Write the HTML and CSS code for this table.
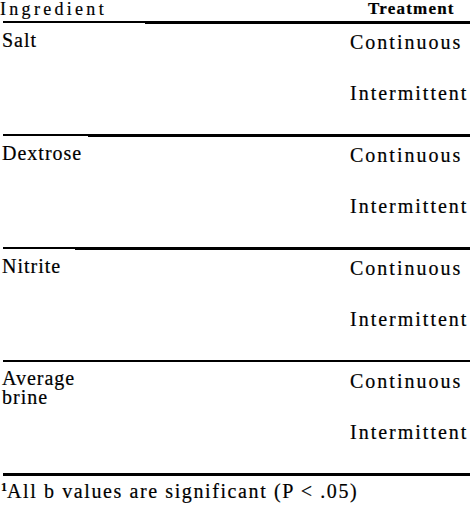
FILE: index.html
```html
<!DOCTYPE html>
<html>
<head>
<meta charset="utf-8">
<link rel="stylesheet" href="styles.css">
</head>
<body>
<div class="page">
  <div class="row head">
    <div class="h-ing">Ingredient</div>
    <div class="h-trt">Treatment</div>
  </div>
  <div class="row group thick-a">
    <div class="ing">Salt</div>
    <div class="trt"><div class="t1">Continuous</div><div class="t2">Intermittent</div></div>
  </div>
  <div class="row group thick-b">
    <div class="ing">Dextrose</div>
    <div class="trt"><div class="t1">Continuous</div><div class="t2">Intermittent</div></div>
  </div>
  <div class="row group thick-c">
    <div class="ing">Nitrite</div>
    <div class="trt"><div class="t1">Continuous</div><div class="t2">Intermittent</div></div>
  </div>
  <div class="row group">
    <div class="ing two">Average<br>brine</div>
    <div class="trt"><div class="t1">Continuous</div><div class="t2">Intermittent</div></div>
  </div>
  <div class="foot"><sup class="fn">1</sup>All b values are significant (P &lt; .05)</div>
</div>
</body>
</html>
```

FILE: styles.css
```css
html, body {
  margin: 0;
  padding: 0;
  background: #fff;
}
body {
  font-family: "Liberation Serif", "Times New Roman", serif;
  color: #000;
  width: 470px;
  height: 508px;
  overflow: hidden;
  -webkit-text-stroke: 0.2px #000;
}
.page {
  display: flex;
  flex-direction: column;
}
.row {
  display: grid;
  grid-template-columns: 347px 1fr;
  margin-left: 3px;
}
.head {
  height: 21px;
  font-size: 18px;
  line-height: 18px;
  letter-spacing: 3.3px;
  box-sizing: border-box;
}
.h-ing {
  margin-left: -3px;
}
.h-trt {
  font-weight: bold;
  font-size: 17px;
  letter-spacing: 1.2px;
  margin-left: 18px;
}
.group {
  height: 113px;
  box-sizing: border-box;
  border-top: 2px solid #000;
  font-size: 20px;
  letter-spacing: 1.5px;
  background-repeat: no-repeat;
  background-position: right top;
  background-image: linear-gradient(#000, #000);
  background-size: 0 1px;
}
.thick-a { background-size: calc(100% - 142px) 1px; }
.thick-b { background-size: calc(100% - 85px) 1px; }
.thick-c { background-size: calc(100% - 72px) 1px; }
.ing {
  padding-top: 5px;
  line-height: 24px;
  margin-left: -1px;
  letter-spacing: 1px;
}
.ing.two {
  line-height: 19px;
  padding-top: 7px;
}
.trt {
  padding-top: 7px;
  letter-spacing: 2px;
}
.t1 {
  line-height: 24px;
}
.t2 {
  line-height: 24px;
  margin-top: 27px;
}
.foot {
  margin-left: 3px;
  border-top: 3px solid #000;
  font-size: 20px;
  line-height: 24px;
  padding-top: 3px;
  letter-spacing: 1.6px;
}
.foot .fn {
  font-size: 12px;
  font-weight: bold;
  vertical-align: 7px;
  line-height: 0;
  margin-left: -2px;
  letter-spacing: 0;
}
```
